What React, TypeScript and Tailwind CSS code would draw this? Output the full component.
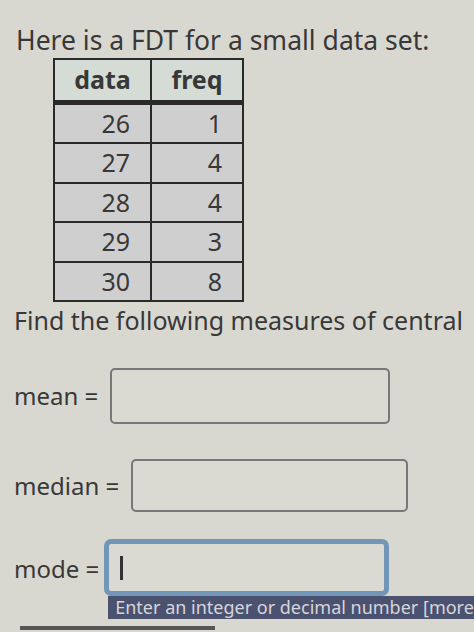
export default function App() {
  const rows = [
    [26, 1],
    [27, 4],
    [28, 4],
    [29, 3],
    [30, 8],
  ];

  return (
    <div
      className="w-[474px] h-[632px] overflow-hidden bg-[#d8d7d0] text-[#383838]"
      style={{ fontFamily: '"Noto Sans", "DejaVu Sans", sans-serif' }}
    >
      <div className="pt-[22px] pl-[16px]">
        <p className="text-[26.5px] leading-[36px] whitespace-nowrap">Here is a FDT for a small data set:</p>

        <table className="ml-[37px] border-collapse text-[25px]">
          <thead>
            <tr>
              <th className="w-[97px] h-[43px] border-2 border-[#2a2a2a] border-b-[5px] bg-[#d5dcd5] font-bold text-center">data</th>
              <th className="w-[92px] h-[43px] border-2 border-[#2a2a2a] border-b-[5px] bg-[#d5dcd5] font-bold text-center">freq</th>
            </tr>
          </thead>
          <tbody>
            {rows.map(([d, f]) => (
              <tr key={d}>
                <td className="h-[39px] border-2 border-[#2a2a2a] bg-[#cfcfd0] text-right pr-[20px]">{d}</td>
                <td className="h-[39px] border-2 border-[#2a2a2a] bg-[#cfcfd0] text-right pr-[20px]">{f}</td>
              </tr>
            ))}
          </tbody>
        </table>

        <p className="ml-[-2px] text-[25px] leading-[36px] whitespace-nowrap">Find the following measures of central</p>
      </div>

      <div className="pl-[14px] mt-[30px] flex flex-col">
        <div className="flex items-center h-[56px]">
          <span className="text-[24px] mr-[12px] whitespace-nowrap">mean =</span>
          <div className="w-[280px] h-[56px] border-2 border-[#777] rounded-[5px] bg-[#dad9d2]" />
        </div>

        <div className="flex items-center h-[53px] mt-[35px]">
          <span className="text-[24px] mr-[12px] whitespace-nowrap">median =</span>
          <div className="w-[277px] h-[53px] border-2 border-[#777] rounded-[5px] bg-[#dad9d2]" />
        </div>

        <div className="flex items-start mt-[27px]">
          <span className="text-[24px] mr-[5px] mt-[12px] whitespace-nowrap">mode =</span>
          <div className="flex flex-col">
            <div className="w-[285px] h-[57px] border-[5px] border-[#7296b8] rounded-[7px] bg-[#dad9d2] flex items-center pl-[11px]">
              <div className="w-[3px] h-[24px] bg-[#333]" />
            </div>
            <div className="ml-[4px] h-[23px] w-[380px] bg-[#4b5270] text-[#d6d6dc] text-[18px] leading-[23px] pl-[7px] whitespace-nowrap overflow-hidden">
              Enter an integer or decimal number [more]
            </div>
          </div>
        </div>
      </div>

      <div className="ml-[20px] mt-[7px] w-[195px] h-[4px] bg-[#555]" />
    </div>
  );
}
